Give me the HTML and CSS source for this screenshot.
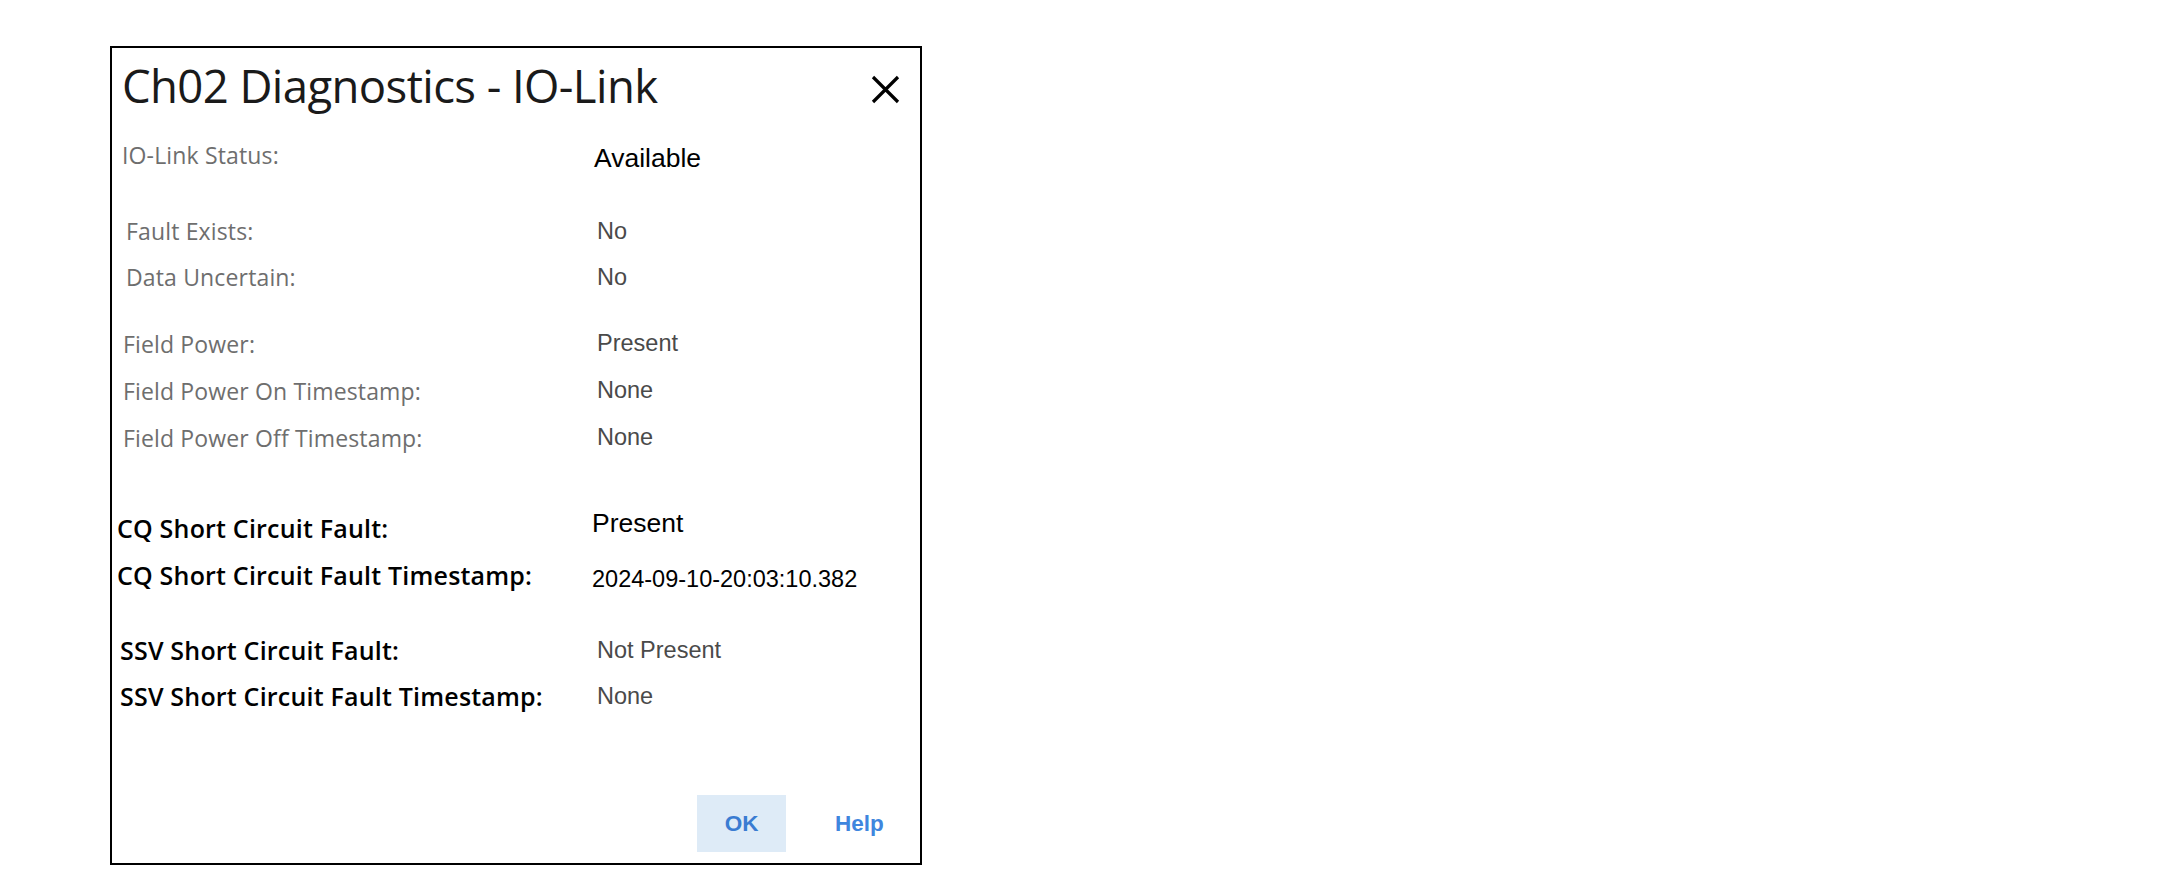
FILE: index.html
```html
<!DOCTYPE html>
<html lang="en">
<head>
<meta charset="utf-8">
<title>Ch02 Diagnostics - IO-Link</title>
<link rel="stylesheet" href="styles.css">
</head>
<body>
<div class="dialog">
  <div class="header">
    <h1 class="title">Ch02 Diagnostics - IO-Link</h1>
    <button class="close" aria-label="Close">
      <svg width="29" height="29" viewBox="0 0 29 29"><path d="M2 2 L27 27 M27 2 L2 27" stroke="#000" stroke-width="3.2" fill="none"/></svg>
    </button>
  </div>

  <div class="section s-status">
    <div class="row r-status"><span class="label">IO-Link Status:</span><span class="value v-big">Available</span></div>
  </div>

  <div class="section s-fault">
    <div class="row"><span class="label">Fault Exists:</span><span class="value v-gray">No</span></div>
    <div class="row"><span class="label">Data Uncertain:</span><span class="value v-gray">No</span></div>
  </div>

  <div class="section s-power">
    <div class="row"><span class="label">Field Power:</span><span class="value v-gray">Present</span></div>
    <div class="row"><span class="label">Field Power On Timestamp:</span><span class="value v-gray">None</span></div>
    <div class="row"><span class="label">Field Power Off Timestamp:</span><span class="value v-gray">None</span></div>
  </div>

  <div class="section s-cq">
    <div class="row"><span class="label">CQ Short Circuit Fault:</span><span class="value v-big v-up">Present</span></div>
    <div class="row"><span class="label">CQ Short Circuit Fault Timestamp:</span><span class="value v-ts v-down">2024-09-10-20:03:10.382</span></div>
  </div>

  <div class="section s-ssv">
    <div class="row"><span class="label">SSV Short Circuit Fault:</span><span class="value v-gray">Not Present</span></div>
    <div class="row"><span class="label">SSV Short Circuit Fault Timestamp:</span><span class="value v-gray">None</span></div>
  </div>

  <div class="footer">
    <button class="btn btn-ok">OK</button>
    <button class="btn btn-help">Help</button>
  </div>
</div>
</body>
</html>
```

FILE: styles.css
```css
html, body {
  margin: 0;
  padding: 0;
  background: #ffffff;
}

body {
  font-family: "Open Sans", "Noto Sans", sans-serif;
}

.dialog {
  box-sizing: border-box;
  margin: 46px 0 0 110px;
  width: 812px;
  height: 819px;
  border: 2px solid #000;
  background: #fff;
  display: flex;
  flex-direction: column;
  padding: 0 0 11px 10px;
}

.header {
  display: flex;
  justify-content: space-between;
  align-items: center;
  height: 74px;
}

.title {
  margin: 0;
  font-weight: 400;
  font-size: 45.5px;
  line-height: 74px;
  color: #1a1a1a;
  letter-spacing: -0.6px;
}

.close {
  border: 0;
  background: transparent;
  padding: 0;
  margin: 9px 20px 0 0;
  width: 29px;
  height: 29px;
  display: flex;
}

.section {
  display: flex;
  flex-direction: column;
}

.row {
  display: grid;
  grid-template-columns: 472px 1fr;
  align-items: center;
  height: 47px;
}

.label {
  font-size: 23px;
  color: #6e6e6e;
  letter-spacing: 0.15px;
  white-space: nowrap;
}

.value {
  font-family: "Liberation Sans", Arial, sans-serif;
  white-space: nowrap;
}

.v-big {
  font-size: 26.5px;
  color: #000;
}

.v-gray {
  font-size: 23.5px;
  color: #4a4a4a;
}

.v-ts {
  font-size: 23.5px;
  color: #000;
}

.v-up {
  padding-bottom: 8px;
}

.v-down {
  padding-top: 10px;
}

.s-status .row {
  height: 66px;
}

.s-status .value {
  padding-top: 7px;
}

.s-fault {
  margin-top: 20px;
}

.s-fault .row {
  height: 46px;
}

.s-fault .label {
  padding-left: 4px;
}

.s-fault .value,
.s-power .value {
  padding-left: 3px;
}

.s-power {
  margin-top: 20px;
}

.s-power .label {
  padding-left: 1px;
}

.s-cq {
  margin-top: 43px;
}

.s-cq .row {
  height: 47px;
}

.s-cq .label,
.s-ssv .label {
  font-size: 25px;
  color: #000;
  font-weight: 600;
  letter-spacing: 0.2px;
  margin-left: -5px;
}

.s-ssv .label {
  margin-left: -2px;
}

.s-cq .value {
  margin-left: -2px;
}

.s-ssv {
  margin-top: 29px;
}

.s-ssv .row {
  height: 46px;
}

.s-ssv .value {
  padding-left: 3px;
}

.footer {
  margin-top: auto;
  display: flex;
  justify-content: flex-end;
  gap: 29px;
  padding-right: 16px;
}

.btn {
  box-sizing: border-box;
  width: 89px;
  height: 57px;
  border: 0;
  padding: 0;
  font-family: "Liberation Sans", Arial, sans-serif;
  font-weight: 700;
  font-size: 22.5px;
  background: transparent;
  color: #3f86de;
}

.btn-ok {
  background: #deebf7;
  color: #3a7cd2;
}
```
